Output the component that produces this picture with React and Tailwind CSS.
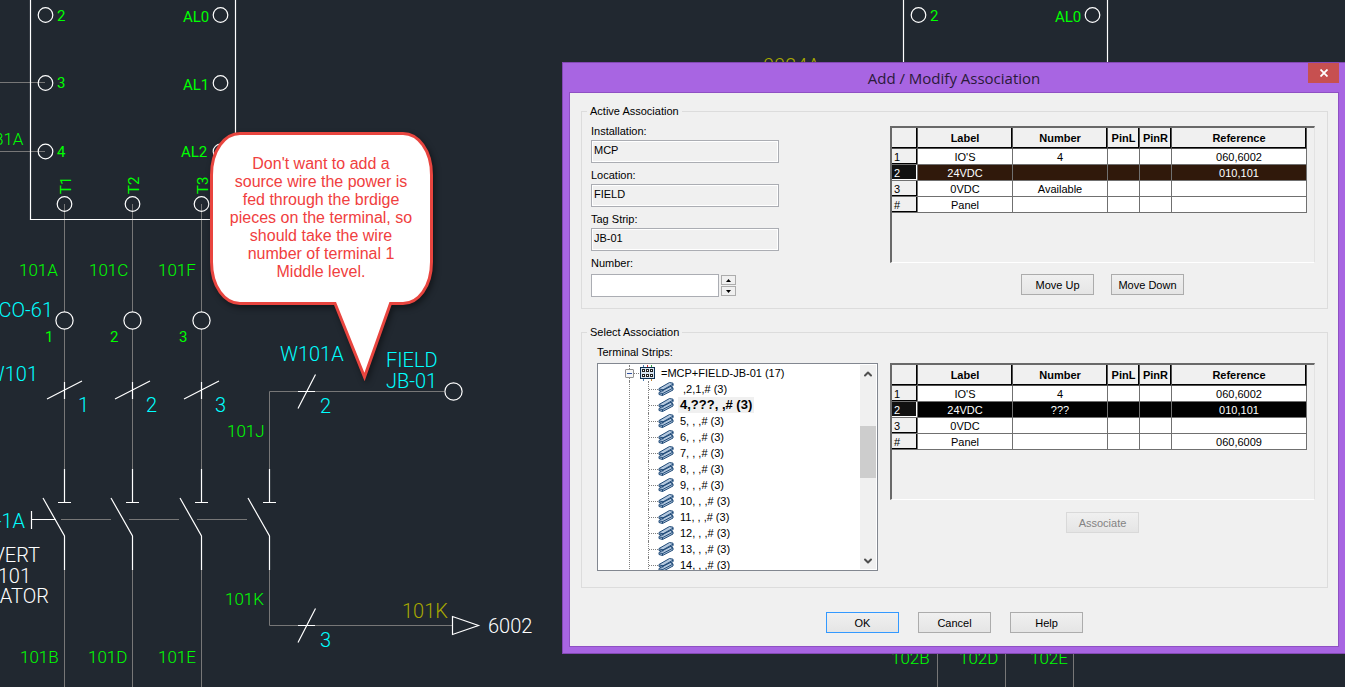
import React, { useState } from 'react';
import { ChevronDown, ChevronUp } from 'lucide-react';

const WHITE = '#ffffff';
const GREEN = '#00ff00';
const CYAN = '#00ffff';
const OLIVE = '#a8a800';
const WIRE = '#777777';

const POLES = [64.5, 132.5, 201.5, 269.5];

const TERMINALS = [
    [45.5, 15], [45.5, 83], [45.5, 151.5],
    [220.5, 15], [220.5, 83], [220.5, 151.5],
    [64.5, 204], [132.5, 204], [201.5, 204],
    [918.5, 15], [1092.5, 15],
];

// pin names and pole numbers
const PIN_LABELS = [
    { x: 57, y: 21, text: '2' },
    { x: 57, y: 88, text: '3' },
    { x: 57, y: 157, text: '4' },
    { x: 183, y: 22, text: 'AL0' },
    { x: 183, y: 90, text: 'AL1' },
    { x: 181, y: 157, text: 'AL2' },
    { x: 930, y: 21, text: '2' },
    { x: 1055, y: 22, text: 'AL0' },
    { x: 45, y: 342, text: '1' },
    { x: 110, y: 342, text: '2' },
    { x: 179, y: 342, text: '3' },
];

const WIRE_LABELS = [
    { x: -6, y: 145, text: '81A' },
    { x: 19, y: 276, text: '101A' },
    { x: 89, y: 276, text: '101C' },
    { x: 158, y: 276, text: '101F' },
    { x: 227, y: 437, text: '101J' },
    { x: 225, y: 605, text: '101K' },
    { x: 20, y: 663, text: '101B' },
    { x: 88, y: 663, text: '101D' },
    { x: 158, y: 663, text: '101E' },
    { x: 891, y: 664, text: '102B' },
    { x: 959, y: 664, text: '102D' },
    { x: 1030, y: 664, text: '102E' },
];

// cables, devices, cross references
const TAGS = [
    { x: 53, y: 317, text: 'CO-61', color: CYAN, end: true },
    { x: 38, y: 381, text: 'W101', color: CYAN, end: true },
    { x: 78, y: 412, text: '1', color: CYAN },
    { x: 146, y: 412, text: '2', color: CYAN },
    { x: 215, y: 412, text: '3', color: CYAN },
    { x: 280, y: 361, text: 'W101A', color: CYAN },
    { x: 386, y: 367, text: 'FIELD', color: CYAN },
    { x: 386, y: 388, text: 'JB-01', color: CYAN },
    { x: 320, y: 413, text: '2', color: CYAN },
    { x: 320, y: 647, text: '3', color: CYAN },
    { x: 25, y: 528, text: '-1A', color: CYAN, end: true },
    { x: 40, y: 562, text: 'VERT', color: WHITE, end: true },
    { x: 31, y: 583, text: '101', color: WHITE, end: true },
    { x: 49, y: 603, text: 'ATOR', color: WHITE, end: true },
    { x: 402, y: 618, text: '101K', color: OLIVE },
    { x: 488, y: 633, text: '6002', color: WHITE },
    { x: 763, y: 73, text: '0024A', color: OLIVE },
];

const CALLOUT_LINES = [
    "Don't want to add a",
    'source wire the power is',
    'fed through the brdige',
    'pieces on the terminal, so',
    'should take the wire',
    'number of terminal 1',
    'Middle level.',
];

const ACTIVE_ROWS = [
    ['1', "IO'S", '4', '', '', '060,6002'],
    ['2', '24VDC', '', '', '', '010,101'],
    ['3', '0VDC', 'Available', '', '', ''],
    ['#', 'Panel', '', '', '', ''],
];

const SELECT_ROWS = [
    ['1', "IO'S", '4', '', '', '060,6002'],
    ['2', '24VDC', '???', '', '', '010,101'],
    ['3', '0VDC', '', '', '', ''],
    ['#', 'Panel', '', '', '', '060,6009'],
];

const TREE_ITEMS = [
    ' ,2,1,# (3)', '4,???, ,# (3)', '5, , ,# (3)', '6, , ,# (3)', '7, , ,# (3)', '8, , ,# (3)',
    '9, , ,# (3)', '10, , ,# (3)', '11, , ,# (3)', '12, , ,# (3)', '13, , ,# (3)', '14, , ,# (3)',
];

function Schematic() {
    return (
        <svg className="absolute inset-0 w-full h-full font-['Roboto',sans-serif] font-light" fill="none" aria-label="Wiring schematic">
            {/* wires */}
            <g stroke={WIRE} strokeWidth="1">
                <path d="M0 82.5H45M0 151.5H45" />
                {POLES.slice(0, 3).map((x) => (
                    <path key={x} d={`M${x} 204V312M${x} 329V469M${x} 570V2000`} />
                ))}
                <path d="M444 391.5H269.5V469M269.5 570V625.5H452" />
                <path d="M61 519.5H111M129 519.5H179M197 519.5H247" />
                <path d="M937.5 600V2000M1005.5 600V2000M1073.5 600V2000" />
            </g>
            {/* devices */}
            <g stroke={WHITE} strokeWidth="1.2">
                <path d="M30.5 0V219.5H235.5V0M903.5 0V120M1107.5 0V120" />
                {TERMINALS.map(([x, y]) => <circle key={`${x}-${y}`} cx={x} cy={y} r="7.3" />)}
                {POLES.slice(0, 3).map((x) => (
                    <g key={x}>
                        <circle cx={x} cy="320.5" r="8.6" />
                        <path d={`M${x} 382V399M${x - 17.5} 399L${x + 17.5} 381`} />
                    </g>
                ))}
                {POLES.map((x) => (
                    <path key={x} d={`M${x} 469V502.5M${x - 6.5} 502.5H${x + 6.5}M${x - 21.5} 498L${x} 536V570`} />
                ))}
                <path d="M31.5 511V529M31.5 519.5H56" />
                <path d="M298 391.5H315M298 408.5L315.5 374.5M298 625.5H315M298 642.5L315.5 608.5" />
                <circle cx="453.5" cy="391.5" r="8.6" />
                <path d="M452.5 616.5V634.5L478.5 625.5Z" />
            </g>
            <g fill={GREEN} fontSize="15" className="font-normal">
                {PIN_LABELS.map((l) => (
                    <text key={`${l.x}-${l.y}`} x={l.x} y={l.y}>{l.text}</text>
                ))}
                {[71, 139, 208].map((x, i) => (
                    <text key={x} transform={`translate(${x} 194) rotate(-90)`}>{`T${i + 1}`}</text>
                ))}
            </g>
            <g fill={GREEN} fontSize="17">
                {WIRE_LABELS.map((l) => (
                    <text key={`${l.x}-${l.y}`} x={l.x} y={l.y}>{l.text}</text>
                ))}
            </g>
            <g fontSize="20">
                {TAGS.map((t) => (
                    <text key={`${t.x}-${t.y}`} x={t.x} y={t.y} fill={t.color} textAnchor={t.end ? 'end' : 'start'}>{t.text}</text>
                ))}
            </g>
        </svg>
    );
}

function Callout() {
    return (
        <div className="absolute left-[208px] top-[130px] w-[226px]">
            <svg width="236" height="256" fill="none" className="absolute left-0 top-0 drop-shadow-[2px_3px_3px_rgba(0,0,0,0.45)]">
                <path
                    d="M32 3.5H195C210 3.5 223.5 20 223.5 45V132C223.5 157 210 173.5 195 173.5H182.500L156.500 247L127 173.500H32C17 173.500 3.500 157 3.500 132V45C3.500 20 17 3.500 32 3.500Z"
                    fill="#ffffff" stroke="#e8453f" strokeWidth="3"
                />
            </svg>
            <p className="relative pt-[25px] text-center text-[16px] leading-[18px] text-[#f04040]">
                {CALLOUT_LINES.map((line) => <span key={line} className="block whitespace-nowrap">{line}</span>)}
            </p>
        </div>
    );
}

function Button({ children, className = 'border-[#acacac] text-black', ...rest }) {
    return (
        <button
            type="button"
            className={`w-[73px] h-[21px] border bg-linear-to-b from-[#f0f0f0] to-[#e5e5e5] text-[11px] leading-[14px] ${className}`}
            {...rest}
        >
            {children}
        </button>
    );
}

function ReadOnlyField({ id, label, value }) {
    return (
        <div className="flex flex-col gap-0.5">
            <label htmlFor={id}>{label}</label>
            <input
                id={id} readOnly defaultValue={value}
                className="w-[188px] h-[23px] border border-[#abadb3] bg-[#f0f0f0] pl-0.5 pb-1 outline outline-white -outline-offset-2"
            />
        </div>
    );
}

function PinTable({ rows, name, selectedClass }) {
    return (
        <div className="w-[425px] h-[137px] border-t-2 border-l-2 border-r border-b border-t-[#696969] border-l-[#696969] border-r-[#e3e3e3] border-b-white">
            <table aria-label={name} className="w-[415px] table-fixed border-separate border-spacing-0 text-center">
                <colgroup>
                    <col className="w-[26px]" />
                    <col className="w-[95px]" />
                    <col className="w-[95px]" />
                    <col className="w-[32px]" />
                    <col className="w-[32px]" />
                    <col className="w-[135px]" />
                </colgroup>
                <thead>
                    <tr className="h-[21px]">
                        {['', 'Label', 'Number', 'PinL', 'PinR', 'Reference'].map((h) => (
                            <th key={h} className="p-0 border-r border-b border-[#505050] bg-[#f0f0f0] font-bold shadow-[inset_-1px_-1px_0_#000000]">{h}</th>
                        ))}
                    </tr>
                </thead>
                <tbody>
                    {rows.map((row, i) => (
                        <tr key={row[0]} className={`h-4 ${i === 1 ? selectedClass : 'bg-white text-black'}`}>
                            <th className={`p-0 pl-0.5 text-left font-normal border-r border-b border-[#707070] ${i === 1 ? 'bg-[#111111] shadow-[inset_-1px_-1px_0_#ffffff]' : 'bg-[#f0f0f0] shadow-[inset_-1px_-1px_0_#000000]'}`}>{row[0]}</th>
                            {row.slice(1).map((cell, j) => (
                                <td key={j} className="p-0 border-r border-b border-[#707070]">{cell}</td>
                            ))}
                        </tr>
                    ))}
                </tbody>
            </table>
        </div>
    );
}

function StripIcon() {
    return (
        <svg width="16" height="16" viewBox="0 0 16 16" fill="none" className="shrink-0">
            <path d="M1 7.500L11.500 1.500L15 2.200L15.200 4.500L13 6L15 6.800V9L4.500 14.500L1 13.500V11.500L3.500 10L1 9.500Z" fill="#b4c8de" stroke="#1f4a78" />
            <path d="M1.500 8L5 8.800L15 3.200M3.500 10.200L13 5.200M1.500 12L4.800 12.500L14.800 7.200M4.800 8.800V10.500M4.500 12.500V14.500" stroke="#1f4a78" />
        </svg>
    );
}

function StripsRootIcon() {
    return (
        <svg width="17" height="16" viewBox="0 0 17 16" fill="none" className="shrink-0">
            <path d="M4.500 0V3M4.500 13V16" stroke="#4a7ab0" />
            <path d="M8.500 0V3" stroke="#d03030" />
            <path d="M12.500 0V3" stroke="#30a040" />
            <path d="M12.500 13V16" stroke="#c08030" />
            <rect x="1.500" y="2.500" width="14" height="11" fill="#d8e4f0" stroke="#0d2f50" />
            {[4, 9].map((y) => [3, 7, 11].map((x) => (
                <rect key={`${x}-${y}`} x={x + 0.5} y={y + 0.5} width="2" height="2" fill="#ffffff" stroke="#202020" />
            )))}
        </svg>
    );
}

function StripTree() {
    const [selected, setSelected] = useState(1);
    return (
        <div className="flex w-[281px] h-[208px] border border-[#828790] bg-white overflow-hidden">
            <ul role="tree" aria-labelledby="strips-label" className="flex-1 pt-px pl-[31px] overflow-hidden">
                <li role="treeitem" aria-expanded="true">
                    <div className="flex items-center h-4">
                        <span className="h-4 border-l border-dotted border-[#808080]" />
                        <button type="button" aria-label="Collapse" className="-ml-[5px] flex items-center justify-center w-[9px] h-[9px] rounded-[1px] border border-[#919191] bg-[#f6f6f6]">
                            <span className="w-[5px] h-px bg-[#3050a0]" />
                        </button>
                        <span className="w-[5px] border-t border-dotted border-[#808080]" />
                        <StripsRootIcon />
                        <span className="pl-[5px] whitespace-nowrap">=MCP+FIELD-JB-01 (17)</span>
                    </div>
                    <ul role="group" className="border-l border-dotted border-[#808080] pl-[18px]">
                        {TREE_ITEMS.map((item, i) => (
                            <li
                                key={item} role="treeitem" aria-selected={i === selected} onClick={() => setSelected(i)}
                                className="flex items-center h-4 border-l border-dotted border-[#808080]"
                            >
                                <span className="w-[9px] border-t border-dotted border-[#808080]" />
                                <StripIcon />
                                <span className={`ml-1 px-0.5 whitespace-pre leading-4 ${i === selected ? 'bg-[#f0f0f0] text-[13px] font-bold' : ''}`}>{item}</span>
                            </li>
                        ))}
                    </ul>
                </li>
            </ul>
            <div className="flex flex-col items-center w-4 mr-px my-px bg-[#f0f0f0] text-[#505050]">
                <button type="button" aria-label="Scroll up" className="h-[17px]"><ChevronUp size={12} strokeWidth={4} /></button>
                <div className="flex-1 w-full pt-11">
                    <div className="h-[52px] w-full bg-[#cdcdcd]" />
                </div>
                <button type="button" aria-label="Scroll down" className="h-[17px]"><ChevronDown size={12} strokeWidth={4} /></button>
            </div>
        </div>
    );
}

function SpinButton({ label, up, onClick }) {
    return (
        <button type="button" aria-label={label} onClick={onClick} className="flex items-center justify-center w-[15px] h-[10px] border border-[#acacac] bg-[#f0f0f0]">
            <svg width="5" height="3" viewBox="0 0 5 3"><path d={up ? 'M0 3L2.5 0L5 3Z' : 'M0 0L2.5 3L5 0Z'} fill="#000000" /></svg>
        </button>
    );
}

function AssociationDialog() {
    const [number, setNumber] = useState('');
    const step = (d) => setNumber(String(Math.max(0, Number(number) + d)));

    return (
        <div role="dialog" aria-labelledby="dialog-title" className="absolute left-[562px] right-0 top-[62px] border border-r-0 border-[#8349b4] bg-[#a865e2] text-[11px] leading-[14px] text-black">
            <div className="relative h-[29px] flex items-center justify-center">
                <h1 id="dialog-title" className="font-['Open_Sans',sans-serif] text-[15px] leading-5 text-[#2b1a3a]">Add / Modify Association</h1>
                <button type="button" aria-label="Close" className="absolute right-1.5 top-0 flex items-center justify-center w-[31px] h-5 bg-[#c75050]">
                    <svg width="8" height="8" viewBox="0 0 8 8"><path d="M0.500 0.500L7.500 7.500M7.500 0.500L0.500 7.500" stroke="#ffffff" strokeWidth="1.800" /></svg>
                </button>
            </div>

            <div className="mx-1.5 mb-1.5 border border-[#8f50c4] bg-[#f0f0f0] pt-[11px] pl-[11px] pr-2.5 pb-[13px]">
                {/* Active Association */}
                <fieldset className="h-[205px] border border-[#dcdcdc] pl-[9px] pr-3">
                    <legend className="-ml-1 px-[3px]">Active Association</legend>
                    <div className="flex justify-between pt-1.5">
                        <div className="flex flex-col gap-[5px]">
                            <ReadOnlyField id="installation" label="Installation:" value="MCP" />
                            <ReadOnlyField id="location" label="Location:" value="FIELD" />
                            <ReadOnlyField id="tag-strip" label="Tag Strip:" value="JB-01" />
                            <div className="flex flex-col gap-1">
                                <label htmlFor="number">Number:</label>
                                <div className="flex items-center gap-0.5">
                                    <input
                                        id="number" value={number} onChange={(e) => setNumber(e.target.value)}
                                        className="w-32 h-[23px] border border-[#abadb3] bg-white pl-0.5"
                                    />
                                    <div className="flex flex-col gap-px">
                                        <SpinButton label="Increase" up onClick={() => step(1)} />
                                        <SpinButton label="Decrease" onClick={() => step(-1)} />
                                    </div>
                                </div>
                            </div>
                        </div>
                        <div className="flex flex-col gap-[11px] pt-0.5">
                            <PinTable name="Active association levels" rows={ACTIVE_ROWS} selectedClass="bg-[#30190b] text-white" />
                            <div className="flex justify-center gap-[17px]">
                                <Button>Move Up</Button>
                                <Button>Move Down</Button>
                            </div>
                        </div>
                    </div>
                </fieldset>

                {/* Select Association */}
                <fieldset className="h-[263px] mt-4 border border-[#dcdcdc] pl-[15px] pr-3">
                    <legend className="-ml-2.5 px-[3px]">Select Association</legend>
                    <div className="flex justify-between pt-1.5">
                        <div className="flex flex-col gap-1">
                            <span id="strips-label">Terminal Strips:</span>
                            <StripTree />
                        </div>
                        <div className="flex flex-col items-center gap-3 pt-[18px]">
                            <PinTable name="Selected association levels" rows={SELECT_ROWS} selectedClass="bg-black text-white" />
                            <Button disabled className="border-[#d9d9d9] text-[#838383]">Associate</Button>
                        </div>
                    </div>
                </fieldset>

                <div className="flex justify-center gap-[19px] pt-6">
                    <Button className="border-[#3399ff] text-black">OK</Button>
                    <Button>Cancel</Button>
                    <Button>Help</Button>
                </div>
            </div>
        </div>
    );
}

export default function App() {
    return (
        <main className="relative min-h-screen overflow-hidden bg-[#212830] font-['Liberation_Sans',Arial,sans-serif]">
            <Schematic />
            <Callout />
            <AssociationDialog />
        </main>
    );
}
